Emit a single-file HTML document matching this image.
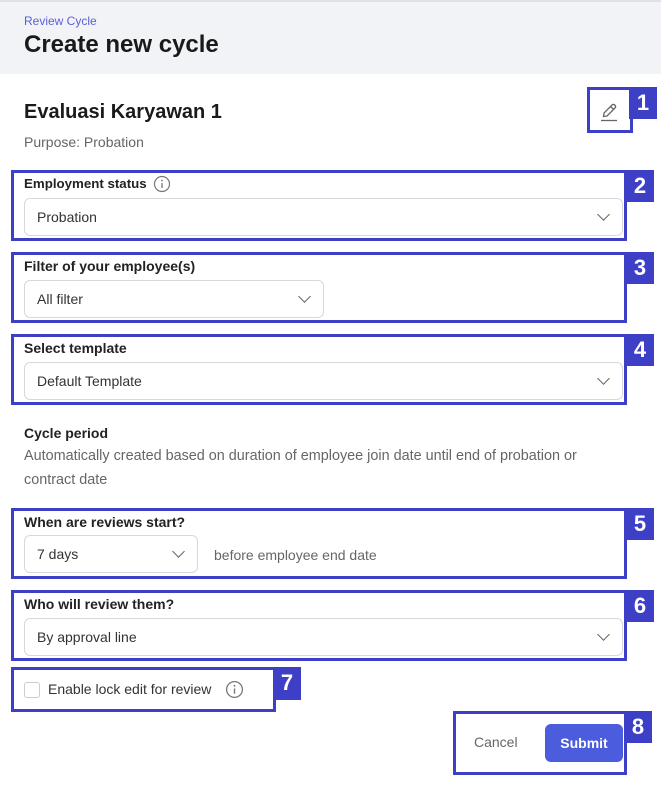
<!DOCTYPE html>
<html><head><style>
*{box-sizing:border-box;margin:0;padding:0}
body{width:661px;height:789px;background:#fff;font-family:"Liberation Sans",sans-serif;position:relative;overflow:hidden;color:#1f2328}
.a{position:absolute}
.box{position:absolute;border:3px solid #3d40c6}
.tab{position:absolute;background:#3d40c6;color:#fff;font-weight:bold;font-size:22px;text-align:center;line-height:31px;width:28px;height:32px}
.lbl{position:absolute;font-size:14px;font-weight:bold;color:#222}
.sel{position:absolute;border:1px solid #d5d8de;border-radius:6px;font-size:14px;color:#333;padding-left:12px;line-height:36px;background:#fff}
.chev{position:absolute;right:14px;width:9px;height:9px;border-right:1.5px solid #666;border-bottom:1.5px solid #666;transform:rotate(45deg);top:11px}
</style></head><body>
<div class="a" style="left:0;top:0;width:661px;height:2px;background:#dfe1e6"></div>
<div class="a" style="left:0;top:2px;width:661px;height:72px;background:#f2f3f7"></div>
<div class="a" style="left:24px;top:14px;font-size:12px;color:#5b5fd8">Review Cycle</div>
<div class="a" style="left:24px;top:31px;font-size:24px;font-weight:bold;color:#1a1a1a">Create new cycle</div>
<div class="a" style="left:24px;top:101px;font-size:20px;font-weight:bold;color:#1a1a1a">Evaluasi Karyawan 1</div>
<div class="a" style="left:24px;top:134px;font-size:14px;color:#666">Purpose: Probation</div>
<div class="box" style="left:587px;top:87px;width:46px;height:46px"></div>
<svg class="a" style="left:598px;top:101px" width="22" height="22" viewBox="0 0 22 22" fill="none" stroke="#666" stroke-width="1.3"><path d="M5.5 15.5 L6 12 L14 4 Q15.5 2.8 17 4.2 Q18.2 5.7 17 7 L9 15 Z M12.5 5.5 L15.8 8.6"/><path d="M3 19.5 H19"/></svg>
<div class="tab" style="left:629px;top:87px">1</div>

<div class="box" style="left:11px;top:170px;width:616px;height:71px"></div>
<div class="tab" style="left:626px;top:170px">2</div>
<div class="lbl" style="left:24px;top:176px;font-size:13.3px">Employment status</div>
<svg class="a" style="left:153px;top:175px" width="18" height="18" viewBox="0 0 18 18"><circle cx="9" cy="9" r="7.5" fill="none" stroke="#777" stroke-width="1.2"/><circle cx="9" cy="5.5" r="0.9" fill="#777"/><path d="M9 8v5" stroke="#777" stroke-width="1.3"/></svg>
<div class="sel" style="left:24px;top:198px;width:599px;height:38px">Probation<div class="chev"></div></div>

<div class="box" style="left:11px;top:252px;width:616px;height:71px"></div>
<div class="tab" style="left:626px;top:252px">3</div>
<div class="lbl" style="left:24px;top:258px">Filter of your employee(s)</div>
<div class="sel" style="left:24px;top:280px;width:300px;height:38px">All filter<div class="chev"></div></div>

<div class="box" style="left:11px;top:334px;width:616px;height:71px"></div>
<div class="tab" style="left:626px;top:334px">4</div>
<div class="lbl" style="left:24px;top:340px">Select template</div>
<div class="sel" style="left:24px;top:362px;width:599px;height:38px">Default Template<div class="chev"></div></div>

<div class="lbl" style="left:24px;top:425px">Cycle period</div>
<div class="a" style="left:24px;top:444px;font-size:14.4px;color:#666;line-height:24px;width:590px">Automatically created based on duration of employee join date until end of probation or contract date</div>

<div class="box" style="left:11px;top:508px;width:616px;height:71px"></div>
<div class="tab" style="left:626px;top:508px">5</div>
<div class="lbl" style="left:24px;top:514px">When are reviews start?</div>
<div class="sel" style="left:24px;top:535px;width:174px;height:38px">7 days<div class="chev"></div></div>
<div class="a" style="left:214px;top:547px;font-size:14px;color:#666">before employee end date</div>

<div class="box" style="left:11px;top:590px;width:616px;height:71px"></div>
<div class="tab" style="left:626px;top:590px">6</div>
<div class="lbl" style="left:24px;top:596px">Who will review them?</div>
<div class="sel" style="left:24px;top:618px;width:599px;height:38px">By approval line<div class="chev"></div></div>

<div class="box" style="left:11px;top:667px;width:265px;height:45px"></div>
<div class="tab" style="left:273px;top:667px;height:33px">7</div>
<div class="a" style="left:24px;top:682px;width:16px;height:16px;border:1px solid #c9ccd2;border-radius:3px"></div>
<div class="a" style="left:48px;top:681px;font-size:14px;color:#333">Enable lock edit for review</div>
<svg class="a" style="left:225px;top:680px" width="19" height="19" viewBox="0 0 18 18"><circle cx="9" cy="9" r="7.5" fill="none" stroke="#777" stroke-width="1.2"/><circle cx="9" cy="5.5" r="0.9" fill="#777"/><path d="M9 8v5" stroke="#777" stroke-width="1.3"/></svg>

<div class="box" style="left:453px;top:711px;width:174px;height:64px"></div>
<div class="tab" style="left:624px;top:711px">8</div>
<div class="a" style="left:474px;top:734px;font-size:14px;color:#666">Cancel</div>
<div class="a" style="left:545px;top:724px;width:78px;height:38px;background:#4b5cdc;border-radius:6px;color:#fff;font-weight:bold;font-size:14px;text-align:center;line-height:38px">Submit</div>
</body></html>
